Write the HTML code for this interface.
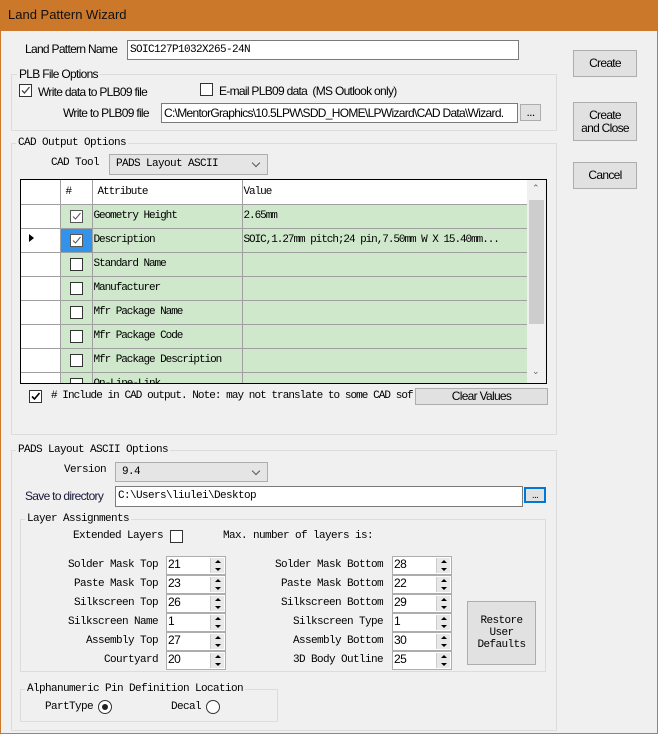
<!DOCTYPE html>
<html><head><meta charset="utf-8"><style>
*{box-sizing:border-box;margin:0;padding:0}
body{width:658px;height:734px;background:#f0f0f0;position:relative;overflow:hidden;font-family:"Liberation Sans",sans-serif;font-size:12px;letter-spacing:-0.7px;color:#000}
.a{position:absolute;white-space:nowrap}
.m{font-family:"Liberation Mono",monospace;font-size:11px;letter-spacing:-0.6px}
.grp{position:absolute;border:1px solid #dcdcdc}
.gl{position:absolute;background:#f0f0f0;padding:0 2px;line-height:12px}
.inp{position:absolute;background:#fff;border:1px solid #7a7a7a;line-height:18px;padding-left:2px;overflow:hidden;white-space:nowrap}
.btn{position:absolute;background:#e1e1e1;border:1px solid #adadad;text-align:center;display:flex;align-items:center;justify-content:center;line-height:13px}
.cb{position:absolute;width:13px;height:13px;border:1px solid #333;background:#fff}
.sel{position:absolute;background:#e5e5e5;border:1px solid #adadad;padding-left:6px;line-height:19px}
.sel:after{content:"";position:absolute;right:8px;top:5px;width:5px;height:5px;border-right:1px solid #555;border-bottom:1px solid #555;transform:rotate(45deg)}
.spin{position:absolute;width:60px;height:19px;border:1px solid #adadad;background:#fff}
.spin span{position:absolute;left:1px;top:0;font-size:12px;line-height:15px;font-family:"Liberation Sans",sans-serif;letter-spacing:-0.5px}
.spin i{position:absolute;right:1px;top:1px;width:14px;height:15px;background:#e8e8e8;border-left:1px solid #ccc}
.spin i:before{content:"";position:absolute;left:4px;top:2px;border:3px solid transparent;border-bottom:3px solid #000;border-top:0}
.spin i:after{content:"";position:absolute;left:4px;top:10px;border:3px solid transparent;border-top:3px solid #000;border-bottom:0}
table{border-collapse:collapse;table-layout:fixed}
td{border:1px solid #a0a0a0;height:24px;padding:0 1px;white-space:nowrap;overflow:hidden;letter-spacing:-1.05px}
</style></head><body>
<div class="a" style="left:0;top:0;width:658px;height:31px;background:#cc782b"></div>
<div class="a" style="left:8px;top:7px;font-size:13px;color:#111;letter-spacing:0">Land Pattern Wizard</div>
<div class="a" style="left:0;top:31px;width:1px;height:703px;background:#cc782b"></div>
<div class="a" style="left:657px;top:31px;width:1px;height:703px;background:#cc782b"></div>
<div class="a" style="left:0;top:733px;width:658px;height:1px;background:#cc782b"></div>

<div class="a" style="left:25px;top:42px">Land Pattern Name</div>
<div class="inp m" style="left:127px;top:40px;width:392px;height:20px">SOIC127P1032X265-24N</div>

<div class="grp" style="left:11px;top:74px;width:546px;height:57px"></div>
<div class="gl" style="left:17px;top:68px">PLB File Options</div>
<div class="cb" style="left:19px;top:84px"><svg width="11" height="11" style="position:absolute;left:0;top:0"><path d="M2 5.5L4.5 8L9.5 2" stroke="#444" fill="none" stroke-width="1.3"/></svg></div>
<div class="a" style="left:38px;top:85px">Write data to PLB09 file</div>
<div class="cb" style="left:200px;top:83px"></div>
<div class="a" style="left:219px;top:84px">E-mail PLB09 data &nbsp;(MS Outlook only)</div>
<div class="a" style="left:63px;top:106px">Write to PLB09 file</div>
<div class="inp" style="left:161px;top:103px;width:357px;height:20px">C:\MentorGraphics\10.5LPW\SDD_HOME\LPWizard\CAD Data\Wizard.</div>
<div class="btn" style="left:520px;top:104px;width:21px;height:17px">...</div>

<div class="btn" style="left:573px;top:50px;width:64px;height:27px">Create</div>
<div class="btn" style="left:573px;top:102px;width:64px;height:39px">Create<br>and Close</div>
<div class="btn" style="left:573px;top:162px;width:64px;height:27px">Cancel</div>

<div class="grp" style="left:11px;top:143px;width:546px;height:292px"></div>
<div class="gl m" style="left:16px;top:137px">CAD Output Options</div>
<div class="a m" style="left:51px;top:157px">CAD Tool</div>
<div class="sel m" style="left:109px;top:154px;width:159px;height:21px">PADS Layout ASCII</div>

<div class="a" style="left:20px;top:179px;width:527px;height:205px;border:1px solid #000;background:#fff;overflow:hidden">
<table class="m" style="position:absolute;left:0;top:0;width:507px">
<colgroup><col style="width:39px"><col style="width:32px"><col style="width:150px"><col></colgroup>
<tr style="background:#fff"><td style="height:20px;border-top:0;border-left:0"></td><td style="padding-left:5px;border-top:0">#</td><td style="padding-left:5px;border-top:0">Attribute</td><td style="border-top:0">Value</td></tr>
<tr><td style="border-left:0"></td><td style="background:#cfe8cb"><div class="cb" style="position:relative;left:8px;border-color:#555"><svg width="11" height="11" style="position:absolute"><path d="M2 5.5L4.5 8L9.5 2" stroke="#555" fill="none"/></svg></div></td><td style="background:#cfe8cb">Geometry Height</td><td style="background:#cfe8cb">2.65mm</td></tr>
<tr><td style="border-left:0"><svg width="12" height="10" style="margin-left:5px"><path d="M2 1L7 5L2 9Z" fill="#000"/></svg></td><td style="background:#3393eb"><div class="cb" style="position:relative;left:8px;border-color:#555"><svg width="11" height="11" style="position:absolute"><path d="M2 5.5L4.5 8L9.5 2" stroke="#555" fill="none"/></svg></div></td><td style="background:#cfe8cb">Description</td><td style="background:#cfe8cb">SOIC,1.27mm pitch;24 pin,7.50mm W X 15.40mm...</td></tr>
<tr><td style="border-left:0"></td><td style="background:#cfe8cb"><div class="cb" style="position:relative;left:8px"></div></td><td style="background:#cfe8cb">Standard Name</td><td style="background:#cfe8cb"></td></tr>
<tr><td style="border-left:0"></td><td style="background:#cfe8cb"><div class="cb" style="position:relative;left:8px"></div></td><td style="background:#cfe8cb">Manufacturer</td><td style="background:#cfe8cb"></td></tr>
<tr><td style="border-left:0"></td><td style="background:#cfe8cb"><div class="cb" style="position:relative;left:8px"></div></td><td style="background:#cfe8cb">Mfr Package Name</td><td style="background:#cfe8cb"></td></tr>
<tr><td style="border-left:0"></td><td style="background:#cfe8cb"><div class="cb" style="position:relative;left:8px"></div></td><td style="background:#cfe8cb">Mfr Package Code</td><td style="background:#cfe8cb"></td></tr>
<tr><td style="border-left:0"></td><td style="background:#cfe8cb"><div class="cb" style="position:relative;left:8px"></div></td><td style="background:#cfe8cb">Mfr Package Description</td><td style="background:#cfe8cb"></td></tr>
<tr><td style="border-left:0"></td><td style="background:#cfe8cb"><div class="cb" style="position:relative;left:8px"></div></td><td style="background:#cfe8cb">On-Line-Link</td><td style="background:#cfe8cb"></td></tr>
</table>
<div class="a" style="left:506px;top:0;width:19px;height:203px;background:#f0f0f0"></div>
<div class="a" style="left:508px;top:20px;width:15px;height:124px;background:#cdcdcd"></div>
<div class="a" style="left:511px;top:3px;font-size:9px;color:#666">&#8963;</div>
<div class="a" style="left:511px;top:186px;font-size:9px;color:#666">&#8964;</div>
</div>

<div class="cb" style="left:29px;top:390px"><svg width="11" height="11" style="position:absolute"><path d="M2 5.5L4.5 8L9.5 2" stroke="#000" fill="none" stroke-width="1.6"/></svg></div>
<div class="a m" style="left:51px;top:390px;width:364px;overflow:hidden;letter-spacing:-0.95px">
# Include in CAD output.  Note: may not translate to some CAD sof</div>
<div class="btn" style="left:415px;top:388px;width:133px;height:17px">Clear Values</div>

<div class="grp" style="left:11px;top:450px;width:546px;height:281px"></div>
<div class="gl m" style="left:16px;top:444px">PADS Layout ASCII Options</div>
<div class="a m" style="left:64px;top:464px">Version</div>
<div class="sel m" style="left:115px;top:462px;width:153px;height:20px">9.4</div>
<div class="a" style="left:25px;top:489px;color:#1a1a3a">Save to directory</div>
<div class="inp m" style="left:115px;top:486px;width:408px;height:21px">C:\Users\liulei\Desktop</div>
<div class="btn" style="left:524px;top:487px;width:22px;height:16px;border:2px solid #0078d7;font-size:10px">...</div>

<div class="grp" style="left:20px;top:519px;width:526px;height:153px"></div>
<div class="gl m" style="left:25px;top:513px">Layer Assignments</div>
<div class="a m" style="left:73px;top:530px">Extended Layers</div>
<div class="cb" style="left:170px;top:530px"></div>
<div class="a m" style="left:223px;top:530px">Max. number of layers is:</div>

<div class="a m" style="left:0;top:556px;width:158px;text-align:right;line-height:19px">Solder Mask Top<br>Paste Mask Top<br>Silkscreen Top<br>Silkscreen Name<br>Assembly Top<br>Courtyard</div>
<div class="a m" style="left:200px;top:556px;width:183px;text-align:right;line-height:19px">Solder Mask Bottom<br>Paste Mask Bottom<br>Silkscreen Bottom<br>Silkscreen Type<br>Assembly  Bottom<br>3D Body Outline</div>

<div class="spin" style="left:166px;top:556px"><span>21</span><i></i></div>
<div class="spin" style="left:166px;top:575px"><span>23</span><i></i></div>
<div class="spin" style="left:166px;top:594px"><span>26</span><i></i></div>
<div class="spin" style="left:166px;top:613px"><span>1</span><i></i></div>
<div class="spin" style="left:166px;top:632px"><span>27</span><i></i></div>
<div class="spin" style="left:166px;top:651px"><span>20</span><i></i></div>
<div class="spin" style="left:392px;top:556px"><span>28</span><i></i></div>
<div class="spin" style="left:392px;top:575px"><span>22</span><i></i></div>
<div class="spin" style="left:392px;top:594px"><span>29</span><i></i></div>
<div class="spin" style="left:392px;top:613px"><span>1</span><i></i></div>
<div class="spin" style="left:392px;top:632px"><span>30</span><i></i></div>
<div class="spin" style="left:392px;top:651px"><span>25</span><i></i></div>

<div class="btn m" style="left:467px;top:601px;width:69px;height:64px;line-height:12px">Restore<br>User<br>Defaults</div>

<div class="grp" style="left:20px;top:689px;width:258px;height:33px"></div>
<div class="gl m" style="left:25px;top:683px">Alphanumeric Pin Definition Location</div>
<div class="a m" style="left:45px;top:701px">PartType</div>
<div class="a" style="left:98px;top:700px;width:14px;height:14px;border:1px solid #333;border-radius:50%;background:#fff"><div style="position:absolute;left:3px;top:3px;width:6px;height:6px;border-radius:50%;background:#222"></div></div>
<div class="a m" style="left:171px;top:701px">Decal</div>
<div class="a" style="left:206px;top:700px;width:14px;height:14px;border:1px solid #333;border-radius:50%;background:#fff"></div>
</body></html>
